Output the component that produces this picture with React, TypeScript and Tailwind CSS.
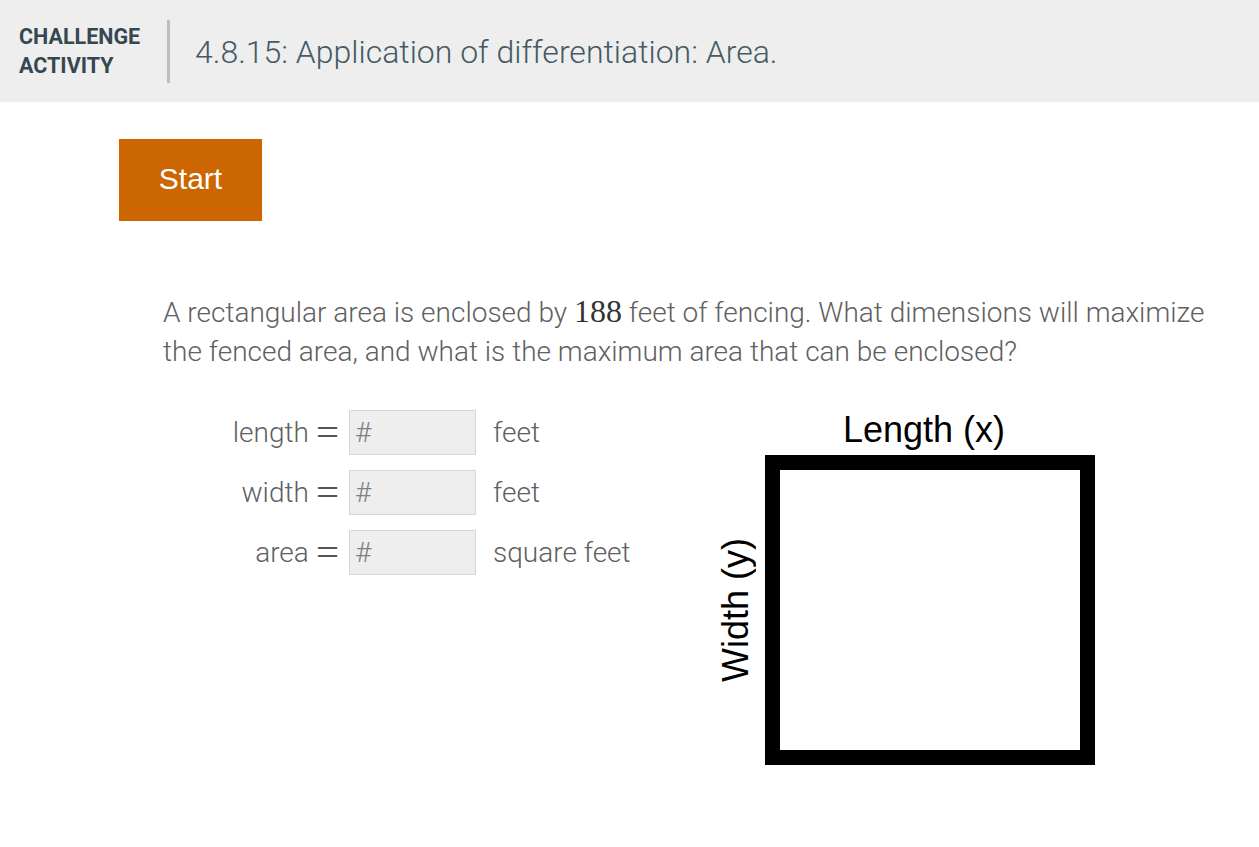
import React from 'react';

const roboto = { fontFamily: 'Roboto, "Noto Sans", sans-serif' };

interface FieldRowProps {
    label: string;
    unit: string;
}

const FieldRow: React.FC<FieldRowProps> = ({ label, unit }) => (
    <div className="flex items-center h-[45px]">
        <div className="w-[110px] flex items-center justify-end text-[28px] font-light text-[#606060]">
            <span>{label}</span>
            <span className="ml-[7px] text-[41px] leading-none font-normal text-[#555555] font-['Liberation_Serif',serif]">=</span>
        </div>
        <input
            type="text"
            placeholder="#"
            className="ml-[10px] w-[127px] h-[45px] px-[5px] bg-[#eeeeee] border border-[#cfd8dc] text-[28px] font-light text-[#606060] placeholder:text-[#808080] outline-none"
        />
        <span className="ml-[17px] text-[28px] font-light text-[#606060]">{unit}</span>
    </div>
);

export default function App() {
    return (
        <div className="min-h-screen bg-white" style={roboto}>
            {/* header */}
            <div className="flex items-center h-[102px] pl-[19px] bg-[#eeeeee]">
                <div className="w-[122px] text-[21.5px] leading-[29px] font-bold text-[#37474f] uppercase">
                    Challenge
                    <br />
                    Activity
                </div>
                <div className="ml-[26px] w-[3px] h-[63px] bg-[#bdbdbd]" />
                <h1 className="ml-[25px] mt-[2px] text-[32px] font-light text-[#455a64]">
                    4.8.15: Application of differentiation: Area.
                </h1>
            </div>

            <div className="pl-[119px] pt-[37px]">
                <button className="w-[143px] h-[82px] pb-[4px] bg-[#cc6600] text-white text-[30px] font-['Liberation_Sans',Arial,sans-serif]">
                    Start
                </button>
            </div>

            <div className="pl-[163px] pr-[30px] pt-[72px]">
                <p className="text-[28px] leading-[39px] font-light text-[#606060]">
                    A rectangular area is enclosed by{' '}
                    <span className="text-[32px] leading-none font-normal text-[#333333] font-['Liberation_Serif',serif]">188</span>{' '}
                    feet of fencing. What dimensions will maximize the fenced area, and what is the maximum area
                    that can be enclosed?
                </p>

                <div className="flex mt-[39px]">
                    <div className="ml-[66px] w-[487px] flex flex-col gap-[15px]">
                        <FieldRow label="length" unit="feet" />
                        <FieldRow label="width" unit="feet" />
                        <FieldRow label="area" unit="square feet" />
                    </div>

                    {/* diagram */}
                    <div className="flex flex-col text-black font-['Liberation_Sans',Arial,sans-serif]">
                        <div className="ml-[49px] w-[330px] pr-[12px] text-center text-[36px] leading-[40px]">
                            Length (x)
                        </div>
                        <div className="flex items-center mt-[5px]">
                            <div className="w-[40px] text-[36px] leading-[40px] whitespace-nowrap [writing-mode:vertical-rl] rotate-180">
                                Width (y)
                            </div>
                            <div className="ml-[9px] w-[330px] h-[310px] border-[15px] border-black bg-white" />
                        </div>
                    </div>
                </div>
            </div>
        </div>
    );
}
